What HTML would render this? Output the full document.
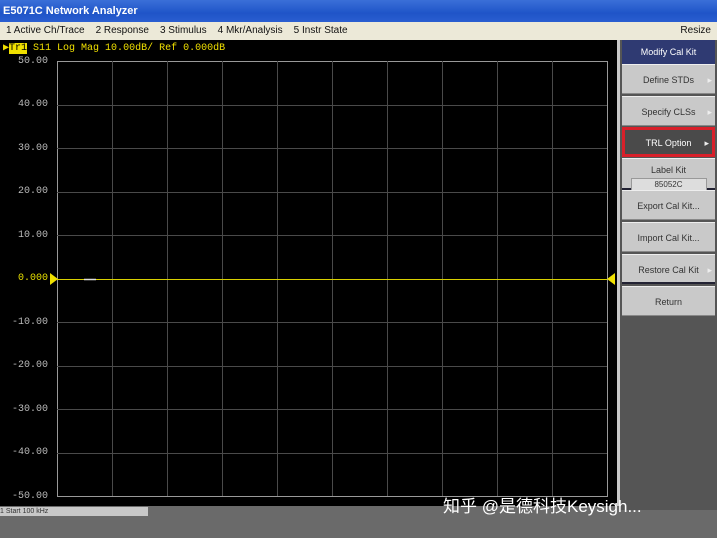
<!DOCTYPE html><html><head><style>
body{margin:0;width:717px;height:538px;overflow:hidden;background:#6a6a6a;font-family:"Liberation Sans",sans-serif;position:relative}
.a{position:absolute}
.title{left:0;top:0;width:717px;height:22px;background:linear-gradient(#3a6fd8,#1f54c8 60%,#2a5ed0);color:#fff;font-weight:bold;font-size:11px;line-height:22px;padding-left:3px;box-sizing:border-box}
.menu{left:0;top:22px;width:717px;height:18px;background:#ece9d8;font-size:10px;line-height:18px;color:#111}
.chart{left:0;top:40px;width:617px;height:466px;background:#000;border-right:3px solid #c8c8c8}
.lab{font-family:"Liberation Mono",monospace;font-size:10px;color:#bbb;width:48px;text-align:right;left:0}
.sk{left:622px;width:93px;height:30px;background:#c9c9c9;border-top:1px solid #eee;border-bottom:1px solid #888;font-size:9px;color:#333;text-align:center;line-height:30px;box-sizing:border-box}
.ar{position:absolute;right:3px;top:0;color:#eee}
</style></head><body>
<div class="a title">E5071C Network Analyzer</div>
<div class="a menu"><span style="margin-left:6px">1 Active Ch/Trace</span><span style="margin-left:11px">2 Response</span><span style="margin-left:11px">3 Stimulus</span><span style="margin-left:11px">4 Mkr/Analysis</span><span style="margin-left:11px">5 Instr State</span><span style="position:absolute;right:6px">Resize</span></div>
<div class="a chart"></div>
<div class="a" style="left:3px;top:42px;font-family:'Liberation Mono',monospace;font-size:10px;color:#f0e000;white-space:pre"><span style="color:#f0e000">&#9654;</span><span style="background:#f0e000;color:#000">Tr1</span> S11 Log Mag 10.00dB/ Ref 0.000dB</div>
<svg class="a" style="left:0;top:0" width="617" height="510">
<rect x="57.5" y="61.5" width="550" height="435" fill="none" stroke="#999"/>
<path d="M112.5 61V496M167.5 61V496M222.5 61V496M277.5 61V496M332.5 61V496M387.5 61V496M442.5 61V496M497.5 61V496M552.5 61V496M57 105.5H607M57 148.5H607M57 192.5H607M57 235.5H607M57 322.5H607M57 366.5H607M57 409.5H607M57 453.5H607" stroke="#4a4a4a"/>
<line x1="57" y1="279.5" x2="607" y2="279.5" stroke="#d8d000" stroke-width="1"/>
<path d="M84 279.5h12" stroke="#ddd" stroke-width="1.5"/>
<polygon points="50,273 58,279 50,285" fill="#f0e000"/>
<polygon points="615,273 607,279 615,285" fill="#f0e000"/>
</svg>
<div class="a lab" style="top:56px">50.00</div>
<div class="a lab" style="top:99px">40.00</div>
<div class="a lab" style="top:143px">30.00</div>
<div class="a lab" style="top:186px">20.00</div>
<div class="a lab" style="top:230px">10.00</div>
<div class="a lab" style="top:273px;color:#e8e000">0.000</div>
<div class="a lab" style="top:317px">-10.00</div>
<div class="a lab" style="top:360px">-20.00</div>
<div class="a lab" style="top:404px">-30.00</div>
<div class="a lab" style="top:447px">-40.00</div>
<div class="a lab" style="top:491px">-50.00</div>
<div class="a" style="left:0;top:507px;width:148px;height:9px;background:#c8c8c8;font-size:7px;color:#333;line-height:9px">1 Start 100 kHz</div>
<div class="a" style="left:620px;top:40px;width:97px;height:470px;background:#555"></div>
<div class="a" style="left:622px;top:40px;width:93px;height:24px;background:#2f3a72;color:#fff;font-size:9px;text-align:center;line-height:24px">Modify Cal Kit</div>
<div class="a sk" style="top:64px">Define STDs<span class="ar">&#9656;</span></div>
<div class="a sk" style="top:96px">Specify CLSs<span class="ar">&#9656;</span></div>
<div class="a sk" style="top:127px;background:#4a4a4a;color:#fff;border:3px solid #d8202a;line-height:26px">TRL Option<span class="ar">&#9656;</span></div>
<div class="a sk" style="top:158px;height:32px;line-height:12px;padding-top:5px;border-bottom:2px solid #223">Label Kit<div style="margin:2px auto 0;width:74px;height:11px;background:#ddd;border:1px solid #999;font-size:8px;line-height:11px">85052C</div></div>
<div class="a sk" style="top:190px">Export Cal Kit...</div>
<div class="a sk" style="top:222px">Import Cal Kit...</div>
<div class="a sk" style="top:254px;border-bottom:2px solid #223">Restore Cal Kit<span class="ar">&#9656;</span></div>
<div class="a sk" style="top:286px">Return</div>
<div class="a" style="left:443px;top:492px;font-size:17px;color:#fff;font-family:'Liberation Sans','Noto Sans CJK SC',sans-serif;white-space:nowrap">知乎 @是德科技Keysigh...</div>
</body></html>
